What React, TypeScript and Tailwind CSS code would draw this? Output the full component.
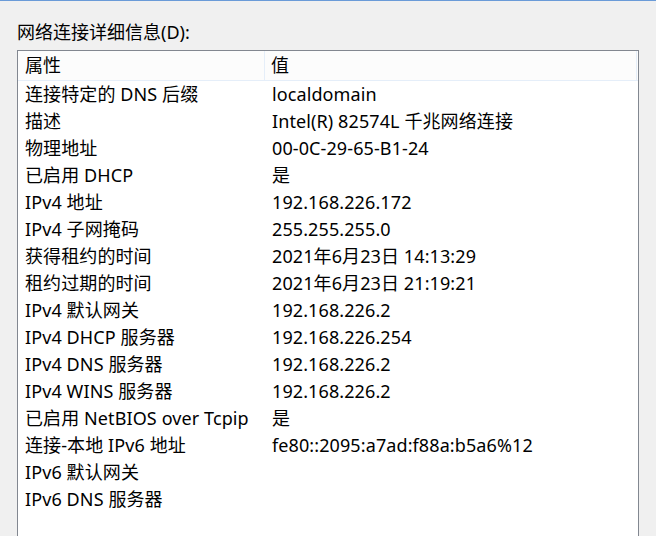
import React from "react";

const rows: [string, string][] = [
  ["连接特定的 DNS 后缀", "localdomain"],
  ["描述", "Intel(R) 82574L 千兆网络连接"],
  ["物理地址", "00-0C-29-65-B1-24"],
  ["已启用 DHCP", "是"],
  ["IPv4 地址", "192.168.226.172"],
  ["IPv4 子网掩码", "255.255.255.0"],
  ["获得租约的时间", "2021年6月23日 14:13:29"],
  ["租约过期的时间", "2021年6月23日 21:19:21"],
  ["IPv4 默认网关", "192.168.226.2"],
  ["IPv4 DHCP 服务器", "192.168.226.254"],
  ["IPv4 DNS 服务器", "192.168.226.2"],
  ["IPv4 WINS 服务器", "192.168.226.2"],
  ["已启用 NetBIOS over Tcpip", "是"],
  ["连接-本地 IPv6 地址", "fe80::2095:a7ad:f88a:b5a6%12"],
  ["IPv6 默认网关", ""],
  ["IPv6 DNS 服务器", ""],
];

export default function App() {
  return (
    <div
      className="w-[656px] h-[536px] overflow-hidden bg-[#f0f0f0] text-black text-[18px] leading-none"
      style={{ fontFamily: '"Noto Sans", "Noto Sans CJK SC", sans-serif' }}
    >
      <div className="h-px bg-[#6a9bd8]" />
      <div className="pl-[17px] pt-[20px] h-[49px] leading-[22px]">网络连接详细信息(D):</div>
      <div className="ml-[17px] w-[622px] h-[600px] border border-[#828790] bg-white">
        <div className="flex h-[30px] bg-[#fcfcfc] border-b border-[#e5eef9]">
          <div className="w-[247px] border-r border-[#e5eef9] pl-[7px] pb-[1px] flex items-center">属性</div>
          <div className="w-[372px] border-r border-[#e5eef9] pl-[6px] pb-[1px] flex items-center">值</div>
        </div>
        {rows.map(([k, v], i) => (
          <div key={i} className="flex h-[27px] items-center pb-[1px] tracking-[0.1px]">
            <div className="w-[248px] pl-[7px] whitespace-nowrap">{k}</div>
            <div className="pl-[6px] whitespace-nowrap">{v}</div>
          </div>
        ))}
      </div>
    </div>
  );
}
